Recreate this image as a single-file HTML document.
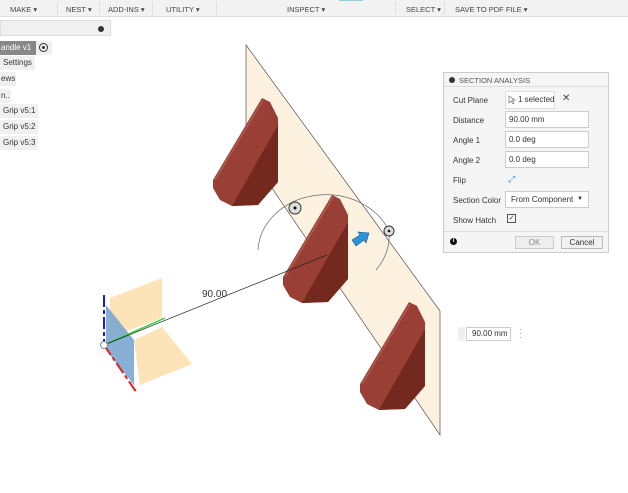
<!DOCTYPE html>
<html><head><meta charset="utf-8"><style>
*{margin:0;padding:0;box-sizing:border-box}
body{width:628px;height:493px;background:#fff;font-family:"Liberation Sans",sans-serif;font-size:8px;color:#333;position:relative;overflow:hidden;white-space:nowrap}
.tb{position:absolute;left:0;top:0;width:628px;height:17px;background:#f2f2f2;border-bottom:1px solid #ddd}
.tb span{position:absolute;top:5px;font-size:7.5px;color:#444}
.sep{position:absolute;top:2px;width:1px;height:13px;background:#ddd}
.br{position:absolute;left:0;background:#f0f0f0;font-size:8px;color:#333;padding:0 3px;height:14px;line-height:14px}
.panel{position:absolute;left:443px;top:72px;width:166px;height:181px;background:#f5f5f5;border:1px solid #ccc}
.row{position:absolute;left:9px;font-size:8px;color:#333}
.inp{position:absolute;left:61px;width:84px;height:17px;background:#fff;border:1px solid #ccc;font-size:8px;line-height:15px;padding-left:3px}
</style></head><body>
<div class="tb">
<span style="left:10px">MAKE ▾</span><div class="sep" style="left:57px"></div>
<span style="left:66px">NEST ▾</span><div class="sep" style="left:99px"></div>
<span style="left:108px">ADD-INS ▾</span><div class="sep" style="left:152px"></div>
<span style="left:166px">UTILITY ▾</span><div class="sep" style="left:216px"></div>
<span style="left:287px">INSPECT ▾</span><div style="position:absolute;left:339px;top:0;width:24px;height:1px;background:#9cd"></div>
<div class="sep" style="left:395px"></div><span style="left:406px">SELECT ▾</span><div class="sep" style="left:444px"></div>
<span style="left:455px">SAVE TO PDF FILE ▾</span>
</div>
<div style="position:absolute;left:0;top:20px;width:111px;height:16px;background:#f0f0f0;border:1px solid #ddd"><div style="position:absolute;left:97px;top:5px;width:6px;height:6px;border-radius:50%;background:#333"></div></div>
<div class="br" style="top:41px;background:#888;color:#fff;width:36px;padding:0 0 0 1px">andle v1</div>
<div style="position:absolute;left:36px;top:41px;width:16px;height:14px;background:#f0f0f0"><div style="position:absolute;left:3px;top:2px;width:9px;height:9px;border:1px solid #333;border-radius:50%"></div><div style="position:absolute;left:6px;top:5px;width:3px;height:3px;border-radius:50%;background:#333"></div></div>
<div class="br" style="top:56px">Settings</div>
<div class="br" style="top:72px;padding:0 1px">ews</div>
<div class="br" style="top:89px;padding:0 1px">n..</div>
<div class="br" style="top:104px">Grip v5:1</div>
<div class="br" style="top:120px">Grip v5:2</div>
<div class="br" style="top:136px">Grip v5:3</div>
<svg width="628" height="493" style="position:absolute;left:0;top:0">
<polygon points="246,45 440,311 440,435 246,150" fill="#fdf1df" stroke="#555" stroke-width="0.7"/>
<g id="b">
<polygon points="262,98 270,102 278,118 278,182 258,205 232,206 220,200 213,188 213,180" fill="#9a3f35"/>
<polygon points="278,125 278,182 258,205 232,206" fill="#74291f"/>
<line x1="215" y1="180" x2="263" y2="100" stroke="#b05a50" stroke-width="1.5"/>
</g>
<use href="#b" transform="translate(70,97)"/>
<use href="#b" transform="translate(147,204)"/>
<path d="M258,250 A68,58 0 0 1 389,231 A68,58 0 0 1 376,270" fill="none" stroke="#666" stroke-width="0.7"/>
<circle cx="295" cy="208" r="6" fill="#ddd" stroke="#333"/><circle cx="295" cy="208" r="1.5" fill="#111"/>
<circle cx="389" cy="231" r="5" fill="#ddd" stroke="#333"/><circle cx="389" cy="231" r="1.3" fill="#111"/>
<path d="M352,240 L360,235 L358,232 L369,233 L366,243 L364,240 L356,246 Z" fill="#2a93d5" stroke="#1a5a8a" stroke-width="0.6"/>
<polygon points="110,298 162,278 162,318 110,337" fill="#fde3b8"/>
<polygon points="134,340 162,327 192,364 140,385" fill="#fde3b8"/>
<polygon points="106,305 134,340 134,385 106,350" fill="#7ba6d0" opacity="0.9"/>
<line x1="104" y1="295" x2="104" y2="345" stroke="#1b1bdc" stroke-width="2" stroke-dasharray="12,3,4,3"/>
<line x1="104" y1="345" x2="137" y2="393" stroke="#e02020" stroke-width="2" stroke-dasharray="12,3,4,3"/>
<line x1="104" y1="345" x2="165" y2="318" stroke="#30d030" stroke-width="1.5"/>
<line x1="104" y1="345" x2="327" y2="255" stroke="#222" stroke-width="0.7"/>
<circle cx="104" cy="345" r="3.5" fill="#fff" stroke="#888"/>
<text x="202" y="297" font-size="10" fill="#333" font-family="Liberation Sans">90.00</text>
</svg>
<div style="position:absolute;left:458px;top:327px;width:7px;height:14px;background:#f0f0f0"></div>
<div style="position:absolute;left:466px;top:327px;width:45px;height:14px;border:1px solid #ccc;background:#fff;font-size:8px;line-height:12px;padding-left:5px">90.00 mm</div>
<div style="position:absolute;left:519px;top:328px;color:#888;font-size:8px;line-height:4px;white-space:normal">·<br>·<br>·</div>
<div class="panel">
<div style="position:absolute;left:0;top:0;width:164px;height:14px;border-bottom:1px solid #ddd"></div>
<div style="position:absolute;left:5px;top:4px;width:6px;height:6px;border-radius:50%;background:#333"></div>
<div style="position:absolute;left:15px;top:3px;font-size:7.5px;color:#555">SECTION ANALYSIS</div>
<div class="row" style="top:23px">Cut Plane</div>
<div style="position:absolute;left:61px;top:18px;width:50px;height:18px;background:#fff;border:1px solid #ddd;font-size:8px;line-height:16px;padding-left:12px;overflow:hidden">1 selected</div>
<svg style="position:absolute;left:64px;top:22px" width="8" height="10"><path d="M1,1 L1,8 L3,6 L5,9 L6,8 L4,5 L7,5 Z" fill="#fff" stroke="#777" stroke-width="0.7"/></svg>
<div style="position:absolute;left:118px;top:20px;font-size:10px;color:#444">✕</div>
<div class="row" style="top:43px">Distance</div><div class="inp" style="top:38px">90.00 mm</div>
<div class="row" style="top:63px">Angle 1</div><div class="inp" style="top:58px">0.0 deg</div>
<div class="row" style="top:83px">Angle 2</div><div class="inp" style="top:78px">0.0 deg</div>
<div class="row" style="top:103px">Flip</div><div style="position:absolute;left:64px;top:101px;color:#2a8ad5;font-size:9px">⤢</div>
<div class="row" style="top:123px">Section Color</div><div class="inp" style="top:118px;padding-left:5px">From Component<span style="position:absolute;right:5px;font-size:6px">▼</span></div>
<div class="row" style="top:143px">Show Hatch</div><div style="position:absolute;left:63px;top:141px;width:9px;height:9px;border:1px solid #555;font-size:7px;line-height:8px;text-align:center">✓</div>
<div style="position:absolute;left:0;top:158px;width:164px;height:1px;background:#ddd"></div>
<div style="position:absolute;left:6px;top:165px;width:7px;height:7px;border-radius:50%;background:#111;color:#fff;font-size:6px;line-height:7px;text-align:center;font-weight:bold">i</div>
<div style="position:absolute;left:71px;top:163px;width:39px;height:13px;border:1px solid #ccc;background:#eee;color:#888;font-size:8px;text-align:center;line-height:11px">OK</div>
<div style="position:absolute;left:117px;top:163px;width:42px;height:13px;border:1px solid #bbb;background:#f0f0f0;color:#333;font-size:8px;text-align:center;line-height:11px">Cancel</div>
</div>
</body></html>
